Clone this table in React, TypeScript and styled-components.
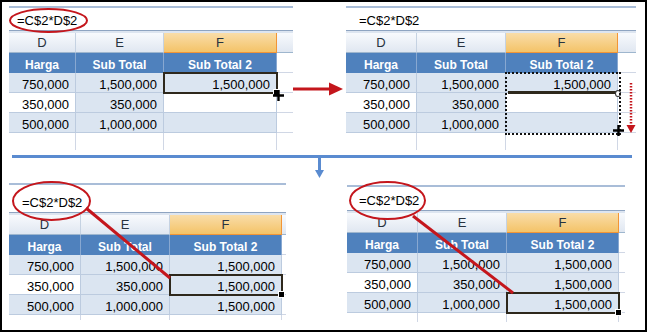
import React from 'react';
import styled, { createGlobalStyle } from 'styled-components';

// colours taken from the Excel 2007 screenshots
const COLORS = {
  RED: '#c4161c',
  BLUE_LINE: '#5a8bd0',
  TITLE: '#4f81bd',
  BAND: '#dbe5f1',
  GRID: '#d0d7e5',
  BODY_LINE: '#bccbdf',
  SELECT: '#2e281c',
};

const GlobalStyle = createGlobalStyle`
  html, body { margin: 0; padding: 0; background: #fff; }
  body { font-family: "Liberation Sans", Arial, sans-serif; }
`;

const Figure = styled.div`
  width: 647px;
  height: 332px;
  box-sizing: border-box;
  border: 2px solid #000;
  background: #fff;
  display: flex;
  flex-direction: column;
  overflow: hidden;
`;

const TopRow = styled.div`
  display: flex;
  align-items: flex-start;
  height: 144px;
  margin: 4px 0 0 7px;
`;

const BottomRow = styled.div`
  display: flex;
  align-items: flex-start;
  margin-left: 7px;
`;

const ArrowSlot = styled.svg`
  flex: none;
  width: 50px;
  height: 14px;
  margin: 76px 3px 0 0;
`;

const Divider = styled.div`
  height: 33px;
  display: flex;
  flex-direction: column;
`;

const BlueLine = styled.div`
  width: 620px;
  height: 3px;
  margin: 5px 0 0 10px;
  background: ${COLORS.BLUE_LINE};
`;

const DownArrow = styled.svg`
  width: 10px;
  height: 20px;
  margin-left: 313px;
`;

// ---------------------------------------------------------------
// one pasted worksheet
// ---------------------------------------------------------------
const Panel = styled.div<{ $width: number; $gap?: number; $drop?: number }>`
  position: relative;
  flex: none;
  width: ${({ $width }) => $width}px;
  margin-left: ${({ $gap }) => $gap || 0}px;
  margin-top: ${({ $drop }) => $drop || 0}px;
  display: flex;
  flex-direction: column;
`;

const FormulaBar = styled.div<{ $h: number; $indent: number }>`
  box-sizing: border-box;
  height: ${({ $h }) => $h + 3}px;
  border-top: 2px solid #a9bdd8;
  border-bottom: 1px solid #8ea4c1;
  background: #fff;
  display: flex;
  align-items: flex-end;
  padding: 0 0 2px ${({ $indent }) => $indent}px;
  font-size: 13px;
  line-height: 15px;
  color: #000;
  white-space: nowrap;
`;

const Strip = styled.div`
  height: 2px;
  background: #dde5f0;
`;

const Sheet = styled.div<{ $cols: number[]; $trailing: number }>`
  display: grid;
  grid-template-columns: ${({ $cols }) => $cols.map((c) => `${c}px`).join(' ')};
  grid-template-rows: repeat(5, 20px) ${({ $trailing }) => $trailing}px;
`;

const ColHead = styled.div<{ $active?: boolean; $edge?: boolean }>`
  box-sizing: border-box;
  text-align: center;
  font-size: 13px;
  line-height: 20px;
  color: #27323f;
  background: ${({ $active }) =>
    $active ? 'linear-gradient(#f9dda9, #f4c368)' : 'linear-gradient(#f8fafd, #e0e7f1)'};
  border-bottom: 1px solid ${({ $active }) => ($active ? '#f29536' : '#9eb6ce')};
  border-right: ${({ $active, $edge }) =>
    $edge ? 'none' : `1px solid ${$active ? '#f29536' : '#c5d2e2'}`};
`;

const TitleCell = styled.div`
  box-sizing: border-box;
  background: ${COLORS.TITLE};
  color: #fff;
  font-weight: bold;
  font-size: 12px;
  line-height: 18px;
  padding-top: 3px;
  text-align: center;
  white-space: nowrap;
  border-right: 1px solid #88a8d1;
`;

const SpareCell = styled.div`
  box-sizing: border-box;
  background: #fff;
  border-bottom: 1px solid ${COLORS.GRID};
`;

const DataCell = styled.div<{ $band?: boolean; $selected?: boolean; $underline?: boolean }>`
  box-sizing: border-box;
  position: relative;
  z-index: ${({ $selected, $underline }) => ($selected || $underline ? 1 : 0)};
  background: ${({ $band }) => ($band ? COLORS.BAND : '#fff')};
  border-right: 1px solid ${COLORS.BODY_LINE};
  border-bottom: 1px solid ${COLORS.BODY_LINE};
  font-size: 13px;
  line-height: 18px;
  padding: 3px 6px 0 0;
  text-align: right;
  color: #000;
  white-space: nowrap;
  outline: ${({ $selected }) => ($selected ? `2px solid ${COLORS.SELECT}` : 'none')};
  outline-offset: -1px;

  &::after {
    content: '';
    display: ${({ $selected }) => ($selected ? 'block' : 'none')};
    position: absolute;
    right: -4px;
    bottom: -4px;
    width: 5px;
    height: 5px;
    background: #000;
    border: 1px solid #fff;
  }

  &::before {
    content: '';
    display: ${({ $underline }) => ($underline ? 'block' : 'none')};
    position: absolute;
    left: 2px;
    right: 1px;
    bottom: -2px;
    height: 3px;
    background: ${COLORS.SELECT};
  }
`;

const RingHandle = styled.span`
  position: absolute;
  right: -4px;
  bottom: -5px;
  width: 4px;
  height: 5px;
  border: 1px solid #333;
  border-radius: 50%;
  background: #fff;
`;

const GridFoot = styled.div<{ $edge?: boolean }>`
  box-sizing: border-box;
  background: #fff;
  border-right: ${({ $edge }) => ($edge ? 'none' : `1px solid ${COLORS.GRID}`)};
`;

// overlays: red marks, the fill cursor and the drag marquee
const Marks = styled.svg`
  position: absolute;
  left: 0;
  top: 0;
  width: 100%;
  height: 100%;
  overflow: visible;
  pointer-events: none;
  z-index: 3;
`;

const Cursor = styled.svg<{ $x: number; $y: number }>`
  position: absolute;
  left: ${({ $x }) => $x}px;
  top: ${({ $y }) => $y}px;
  width: 13px;
  height: 13px;
  z-index: 4;
`;

const Marquee = styled.div`
  position: absolute;
  left: 159px;
  top: 66px;
  width: 116px;
  height: 63px;
  box-sizing: border-box;
  border: 2px dotted #111;
  z-index: 2;
`;

const ROWS = [
  { d: '750,000', e: '1,500,000', dBand: true },
  { d: '350,000', e: '350,000', dBand: false },
  { d: '500,000', e: '1,000,000', dBand: true },
];

interface SheetProps {
  widths: number[];
  formulaH: number;
  indent: number;
  trailing: number;
  fValues: string[];
  fBand: boolean[];
  selected?: number;
  underline?: number;
  gap?: number;
  drop?: number;
  children?: React.ReactNode;
}

const SheetPanel: React.FC<SheetProps> = ({
  widths, formulaH, indent, trailing, fValues, fBand, selected, underline, gap, drop, children,
}) => (
  <Panel $width={widths.reduce((a, b) => a + b, 0)} $gap={gap} $drop={drop}>
    <FormulaBar $h={formulaH} $indent={indent}>=C$2*D$2</FormulaBar>
    <Strip />
    <Sheet $cols={widths} $trailing={trailing}>
      <ColHead>D</ColHead>
      <ColHead>E</ColHead>
      <ColHead $active>F</ColHead>
      <ColHead $edge />
      <TitleCell>Harga</TitleCell>
      <TitleCell>Sub Total</TitleCell>
      <TitleCell>Sub Total 2</TitleCell>
      <SpareCell />
      {ROWS.map((r, i) => (
        <React.Fragment key={r.d}>
          <DataCell $band={r.dBand}>{r.d}</DataCell>
          <DataCell $band>{r.e}</DataCell>
          <DataCell $band={fBand[i]} $selected={selected === i} $underline={underline === i}>
            {fValues[i]}
            {underline === i && <RingHandle />}
          </DataCell>
          <SpareCell />
        </React.Fragment>
      ))}
      <GridFoot />
      <GridFoot />
      <GridFoot />
      <GridFoot $edge />
    </Sheet>
    {children}
  </Panel>
);

const PlusCursor: React.FC<{ x: number; y: number }> = ({ x, y }) => (
  <Cursor $x={x} $y={y} viewBox="0 0 13 13">
    <path d="M6.5 1 V12 M1 6.5 H12" stroke="#000" strokeWidth="2.4" />
  </Cursor>
);

const FULL = ['1,500,000', '1,500,000', '1,500,000'];

export default function App() {
  return (
    <>
      <GlobalStyle />
      <Figure>
        <TopRow>
          <SheetPanel
            widths={[67, 88, 113, 16]}
            formulaH={22}
            indent={8}
            trailing={17}
            fValues={['1,500,000', '', '']}
            fBand={[true, false, true]}
            selected={0}
          >
            <Marks>
              <ellipse cx="39.5" cy="14.5" rx="38.5" ry="11.5" fill="none" stroke={COLORS.RED} strokeWidth="2" />
            </Marks>
            <PlusCursor x={263} y={83} />
          </SheetPanel>

          <ArrowSlot viewBox="0 0 50 14">
            <path d="M0 7 H37" stroke={COLORS.RED} strokeWidth="3" />
            <polygon points="36,0.5 50,7 36,13.5" fill={COLORS.RED} />
          </ArrowSlot>

          <SheetPanel
            widths={[71, 89, 112, 18]}
            formulaH={22}
            indent={13}
            trailing={17}
            fValues={['1,500,000', '', '']}
            fBand={[true, false, true]}
            underline={0}
          >
            <Marquee />
            <Marks>
              <path d="M285 77 V119" stroke={COLORS.RED} strokeWidth="2.5" strokeDasharray="1.5 1.5" />
              <polygon points="280.5,119 289.5,119 285,127" fill={COLORS.RED} />
            </Marks>
            <PlusCursor x={266} y={118} />
          </SheetPanel>
        </TopRow>

        <Divider>
          <BlueLine />
          <DownArrow viewBox="0 0 10 20">
            <rect x="3" y="0" width="3" height="13" fill={COLORS.BLUE_LINE} />
            <polygon points="0,12 9,12 4.5,20" fill={COLORS.BLUE_LINE} />
          </DownArrow>
        </Divider>

        <BottomRow>
          <SheetPanel
            widths={[72, 89, 112, 4]}
            formulaH={27}
            indent={13}
            trailing={5}
            fValues={FULL}
            fBand={[true, true, true]}
            selected={1}
          >
            <Marks>
              <ellipse cx="42.5" cy="18" rx="38.5" ry="19" fill="none" stroke={COLORS.RED} strokeWidth="2" />
              <path d="M77 25 L161 95" stroke={COLORS.RED} strokeWidth="3" />
            </Marks>
          </SheetPanel>

          <SheetPanel
            widths={[71, 89, 112, 6]}
            formulaH={23}
            indent={12}
            trailing={9}
            fValues={FULL}
            fBand={[true, true, true]}
            selected={2}
            gap={61}
            drop={2}
          >
            <Marks>
              <ellipse cx="40.5" cy="15.5" rx="37.5" ry="18.5" fill="none" stroke={COLORS.RED} strokeWidth="2" />
              <path d="M66 31 L166 108" stroke={COLORS.RED} strokeWidth="3" />
            </Marks>
          </SheetPanel>
        </BottomRow>
      </Figure>
    </>
  );
}
